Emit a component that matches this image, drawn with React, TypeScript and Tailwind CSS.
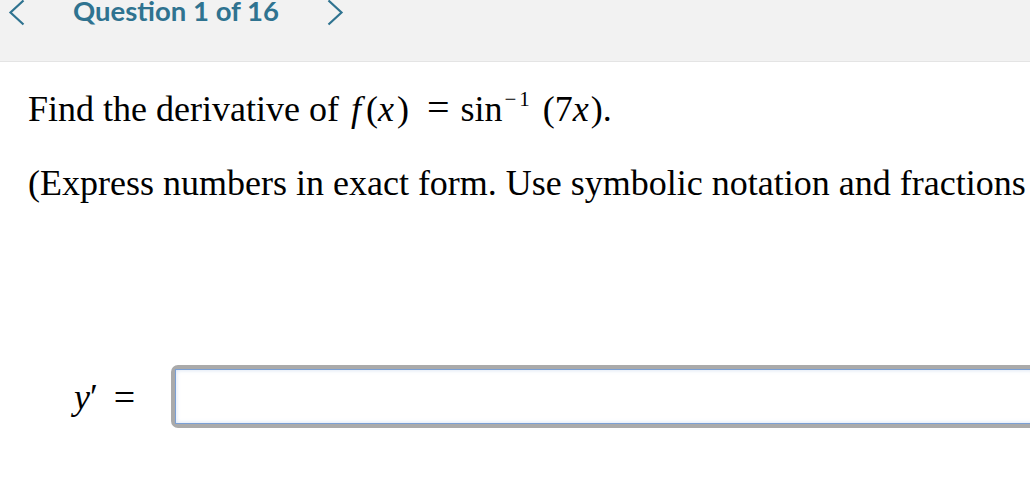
export default function App() {
  return (
    <div className="w-[1030px] h-[490px] overflow-hidden bg-white">
      {/* question nav */}
      <div className="h-[62px] bg-[#f2f2f2] border-b border-[#e4e4e4] flex items-start">
        <button className="ml-[8px] text-[#2f7390]">
          <svg width="18" height="26" viewBox="0 0 18 26" fill="none" stroke="currentColor" strokeWidth="2.2">
            <polyline points="15.5,0.5 2.5,12.5 15.5,24.5" />
          </svg>
        </button>
        <span
          className="ml-[47px] text-[27.5px] font-bold text-[#2f7390] leading-[22px]"
          style={{ fontFamily: "Lato, 'Open Sans', sans-serif" }}
        >
          Question 1 of 16
        </span>
        <button className="ml-[47px] text-[#2f7390]">
          <svg width="18" height="26" viewBox="0 0 18 26" fill="none" stroke="currentColor" strokeWidth="2.2">
            <polyline points="2.5,0.5 15.5,12.5 2.5,24.5" />
          </svg>
        </button>
      </div>

      <div
        className="pl-[28px] text-black whitespace-nowrap"
        style={{ fontFamily: "'Liberation Serif', 'Times New Roman', serif" }}
      >
        <p className="mt-[26px] text-[36px] leading-[40px]">
          Find the derivative of
          <span className="ml-[12px]">
            <i>f</i>
            <span className="ml-[5px]">(</span>
            <i>x</i>
            <span className="ml-[3px]">)</span>
          </span>
          <span className="ml-[18px] text-[40px] leading-[40px]">=</span>
          <span className="ml-[11px]">sin</span>
          <span className="ml-[2px] inline-block align-baseline text-[21px] leading-none relative -top-[15px]">
            −<span className="ml-[3px]">1</span>
          </span>
          <span className="ml-[13px]">
            (7<i>x</i>
            <span className="ml-[2px]">).</span>
          </span>
        </p>
        <p className="mt-[34px] text-[36px] leading-[40px]">
          (Express numbers in exact form. Use symbolic notation and fractions
        </p>

        <div className="mt-[162px] flex items-center">
          <span className="ml-[46px] text-[36px] leading-[40px]">
            <i>y</i>′
          </span>
          <span className="ml-[16px] text-[38px] leading-[40px]">=</span>
          <div className="ml-[36px] shrink-0 w-[900px] h-[63px] rounded-[7px] border-[4px] border-[#aaaaaa] bg-white">
            <div className="w-full h-full border border-[#7a9fd4] shadow-[inset_0_0_4px_rgba(122,159,212,0.35)]" />
          </div>
        </div>
      </div>
    </div>
  );
}
